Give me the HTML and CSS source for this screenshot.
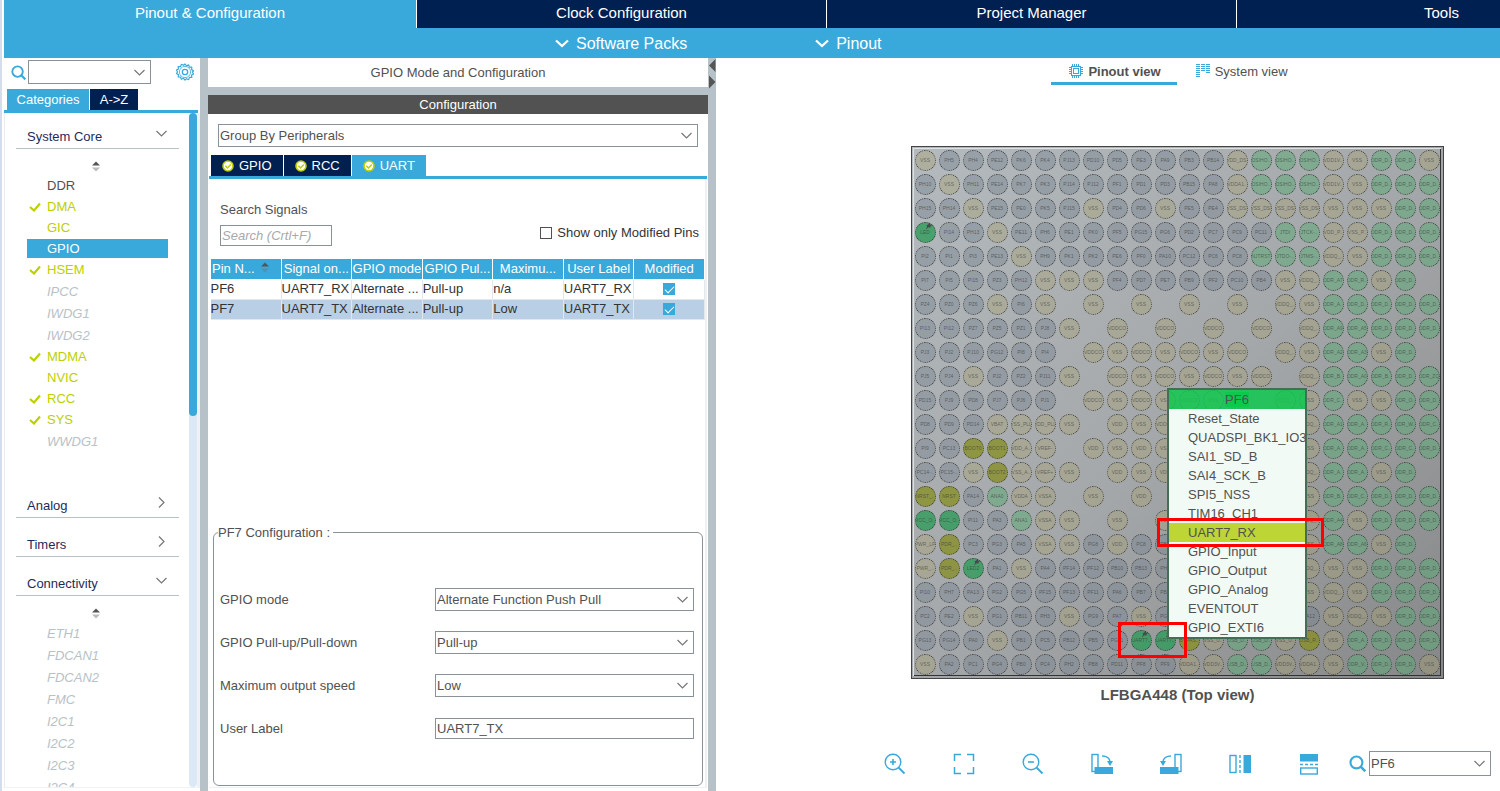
FILE: index.html
```html
<!DOCTYPE html>
<html lang="en">
<head>
    <meta charset="UTF-8">
    <meta name="viewport" content="width=device-width, initial-scale=1.0">
    <title>Pinout &amp; Configuration</title>
    <link rel="stylesheet" href="styles.css">
</head>
<body>
    <svg class="defs" aria-hidden="true">
        <symbol id="i-down" viewBox="0 0 11 7"><path d="M.5 1l5 5 5-5" fill="none" stroke="currentColor" stroke-width="1.2"/></symbol>
        <symbol id="i-right" viewBox="0 0 7 11"><path d="M1 .5l5 5-5 5" fill="none" stroke="currentColor" stroke-width="1.2"/></symbol>
        <symbol id="i-tick" viewBox="0 0 12 10"><path d="M1 5l4 3.5L11 1.5" fill="none" stroke="currentColor" stroke-width="2.2"/></symbol>
        <symbol id="i-ok" viewBox="0 0 12 12"><circle cx="6" cy="6" r="5" fill="#fff" stroke="#bccf00" stroke-width="1.6"/><path d="M3.3 5.8l2.2 2.2L8.8 4.6" fill="none" stroke="#bccf00" stroke-width="1.5"/></symbol>
        <symbol id="i-sort" viewBox="0 0 8 11"><path d="M0 4.5L4 .5l4 4z" fill="#555"/><path d="M0 6.5l4 4 4-4z" fill="currentColor"/></symbol>
        <symbol id="i-search" viewBox="0 0 16 16"><circle cx="7" cy="7" r="5.6" fill="none" stroke="currentColor" stroke-width="2"/><path d="M11 11l4.3 4.3" stroke="currentColor" stroke-width="2.4"/></symbol>
        <symbol id="i-pin" viewBox="0 0 8 8"><path d="M4 0l4 3-1.5 1L6 6 4 5.5 1 8l1.500-3.500L1.500 3l2-.5z" fill="#4a4a4a"/></symbol>
    </svg>

    <div class="app">
        <nav class="main-tabs">
            <button class="main-tab active">Pinout &amp; Configuration</button>
            <button class="main-tab">Clock Configuration</button>
            <button class="main-tab">Project Manager</button>
            <button class="main-tab">Tools</button>
        </nav>
        <div class="sub-bar">
            <button><svg width="14" height="9"><path d="M1 1.500l6 5.500 6-5.500" fill="none" stroke="#fff" stroke-width="2.200"/></svg>Software Packs</button>
            <button><svg width="14" height="9"><path d="M1 1.500l6 5.500 6-5.500" fill="none" stroke="#fff" stroke-width="2.200"/></svg>Pinout</button>
        </div>

        <main class="panes">
            <aside class="sidebar">
                <div class="side-search">
                    <svg class="blue" width="15" height="15"><use href="#i-search"/></svg>
                    <div class="combo">
                        <select aria-label="Search peripheral"><option></option></select>
                        <svg width="11" height="7"><use href="#i-down"/></svg>
                    </div>
                    <button class="gear" aria-label="Settings">
                        <svg width="18" height="18" viewBox="0 0 18 18" fill="none" stroke="#39a9dc">
                            <path d="M9 1l1.500 1.900 2.200-1 .7 2.300 2.400 0-.2 2.400 2 1.100L16.400 9l1.200 1.900-2 1.100.2 2.400-2.400 0-.7 2.300-2.200-1L9 17.200l-1.500-1.900-2.200 1-.7-2.300-2.400 0 .2-2.400-2-1.100L1.600 9 .4 7.100l2-1.100-.2-2.400 2.400 0 .7-2.300 2.200 1z" stroke-width="1.200" stroke-linejoin="round"/>
                            <circle cx="9" cy="9" r="5.600" stroke-width=".8"/>
                            <circle cx="9" cy="9" r="2.700" stroke-width="1.300"/>
                        </svg>
                    </button>
                </div>
                <div class="tabs side-tabs">
                    <button class="tab active">Categories</button>
                    <button class="tab">A-&gt;Z</button>
                </div>
                <div class="tree">
                    <div class="tree-list">
                        <button class="category">System Core <svg width="11" height="7"><use href="#i-down"/></svg></button>
                        <div class="group">
                            <svg class="sorter" width="8" height="11"><use href="#i-sort"/></svg>
                            <ul>
                                <li>DDR</li>
                                <li class="used"><svg width="12" height="10"><use href="#i-tick"/></svg>DMA</li>
                                <li class="used">GIC</li>
                                <li class="selected">GPIO</li>
                                <li class="used"><svg width="12" height="10"><use href="#i-tick"/></svg>HSEM</li>
                                <li class="off">IPCC</li>
                                <li class="off">IWDG1</li>
                                <li class="off">IWDG2</li>
                                <li class="used"><svg width="12" height="10"><use href="#i-tick"/></svg>MDMA</li>
                                <li class="used">NVIC</li>
                                <li class="used"><svg width="12" height="10"><use href="#i-tick"/></svg>RCC</li>
                                <li class="used"><svg width="12" height="10"><use href="#i-tick"/></svg>SYS</li>
                                <li class="off">WWDG1</li>
                            </ul>
                        </div>
                        <button class="category">Analog <svg width="11" height="11"><use href="#i-right"/></svg></button>
                        <button class="category">Timers <svg width="11" height="11"><use href="#i-right"/></svg></button>
                        <button class="category">Connectivity <svg width="11" height="7"><use href="#i-down"/></svg></button>
                        <div class="group">
                            <svg class="sorter" width="8" height="11"><use href="#i-sort"/></svg>
                            <ul>
                                <li class="off">ETH1</li>
                                <li class="off">FDCAN1</li>
                                <li class="off">FDCAN2</li>
                                <li class="off">FMC</li>
                                <li class="off">I2C1</li>
                                <li class="off">I2C2</li>
                                <li class="off">I2C3</li>
                                <li class="off">I2C4</li>
                            </ul>
                        </div>
                    </div>
                    <div class="scrollbar"><div class="thumb"></div></div>
                </div>
            </aside>

            <div class="splitter"></div>

            <section class="config">
                <h2 class="config-title">GPIO Mode and Configuration</h2>
                <h3 class="config-bar">Configuration</h3>
                <div class="config-body">
                    <div class="combo group-by">
                        <select aria-label="Group by"><option>Group By Peripherals</option></select>
                        <svg width="11" height="7"><use href="#i-down"/></svg>
                    </div>
                    <div class="tabs config-tabs">
                        <button class="tab"><svg width="12" height="12"><use href="#i-ok"/></svg>GPIO</button>
                        <button class="tab"><svg width="12" height="12"><use href="#i-ok"/></svg>RCC</button>
                        <button class="tab active"><svg width="12" height="12"><use href="#i-ok"/></svg>UART</button>
                    </div>
                    <div class="tab-panel">
                        <div class="filters">
                            <div class="signal-search">
                                <label for="signals">Search Signals</label>
                                <input type="text" id="signals" placeholder="Search (Crtl+F)">
                            </div>
                            <label class="only-modified"><input type="checkbox">Show only Modified Pins</label>
                        </div>
                        <table>
                            <thead>
                                <tr>
                                    <th class="sorted">Pin N... <svg width="8" height="11"><use href="#i-sort"/></svg></th>
                                    <th>Signal on...</th>
                                    <th>GPIO mode</th>
                                    <th>GPIO Pul...</th>
                                    <th>Maximu...</th>
                                    <th>User Label</th>
                                    <th>Modified</th>
                                </tr>
                            </thead>
                            <tbody>
                                <tr>
                                    <td>PF6</td><td>UART7_RX</td><td>Alternate ...</td><td>Pull-up</td><td>n/a</td><td>UART7_RX</td>
                                    <td class="check"><input type="checkbox" checked aria-label="PF6 modified"></td>
                                </tr>
                                <tr class="current">
                                    <td>PF7</td><td>UART7_TX</td><td>Alternate ...</td><td>Pull-up</td><td>Low</td><td>UART7_TX</td>
                                    <td class="check"><input type="checkbox" checked aria-label="PF7 modified"></td>
                                </tr>
                            </tbody>
                        </table>
                        <fieldset>
                            <legend>PF7 Configuration :</legend>
                            <div class="field">
                                <label for="mode">GPIO mode</label>
                                <div class="combo">
                                    <select id="mode"><option>Alternate Function Push Pull</option></select>
                                    <svg width="11" height="7"><use href="#i-down"/></svg>
                                </div>
                            </div>
                            <div class="field">
                                <label for="pull">GPIO Pull-up/Pull-down</label>
                                <div class="combo">
                                    <select id="pull"><option>Pull-up</option></select>
                                    <svg width="11" height="7"><use href="#i-down"/></svg>
                                </div>
                            </div>
                            <div class="field">
                                <label for="speed">Maximum output speed</label>
                                <div class="combo">
                                    <select id="speed"><option>Low</option></select>
                                    <svg width="11" height="7"><use href="#i-down"/></svg>
                                </div>
                            </div>
                            <div class="field">
                                <label for="user-label">User Label</label>
                                <input type="text" id="user-label" value="UART7_TX">
                            </div>
                        </fieldset>
                    </div>
                </div>
            </section>

            <div class="splitter">
                <svg width="8" height="32"><path d="M7.500 1v13L1 7.500zM1 17.500v13L7.500 24z" fill="#555"/></svg>
            </div>

            <section class="pinout">
                <div class="views">
                    <button class="view active">
                        <svg width="14" height="14" fill="none" stroke="#39a9dc">
                            <rect x="2.500" y="2.500" width="9" height="9"/>
                            <rect x="4.500" y="4.500" width="5" height="5"/>
                            <path d="M3 1h8M3 13h8" stroke-width="2" stroke-dasharray="1 1"/>
                            <path d="M1 3v8M13 3v8" stroke-width="2" stroke-dasharray="1 1"/>
                        </svg>
                        Pinout view
                    </button>
                    <button class="view">
                        <svg width="14" height="14" fill="none" stroke="#39a9dc" stroke-width="4">
                            <path d="M2 0v13" stroke-dasharray="1 1"/>
                            <path d="M7 0v7" stroke-dasharray="1 1"/>
                            <path d="M12 0v9" stroke-dasharray="1 1"/>
                        </svg>
                        System view
                    </button>
                </div>

                <div class="chip">
                    <div class="pins" id="pins"></div>
                    <div class="signal-menu">
                        <div class="menu-title"><span>PF6</span></div>
                        <button>Reset_State</button>
                        <button>QUADSPI_BK1_IO3</button>
                        <button>SAI1_SD_B</button>
                        <button>SAI4_SCK_B</button>
                        <button>SPI5_NSS</button>
                        <button>TIM16_CH1</button>
                        <button class="chosen">UART7_RX</button>
                        <button>GPIO_Input</button>
                        <button>GPIO_Output</button>
                        <button>GPIO_Analog</button>
                        <button>EVENTOUT</button>
                        <button>GPIO_EXTI6</button>
                    </div>
                    <div class="mark mark-signal"></div>
                    <div class="mark mark-pins"></div>
                </div>
                <p class="caption">LFBGA448 (Top view)</p>

                <div class="toolbar">
                    <button aria-label="Zoom in"><svg width="22" height="22" fill="none" stroke="#39a9dc" stroke-width="1.400"><circle cx="9" cy="9" r="7.800"/><path d="M14.500 14.500l6 6"  stroke-width="1.800"/><path d="M6 9h6M9 6v6" stroke-width="1.600"/></svg></button>
                    <button aria-label="Best fit"><svg width="22" height="22" fill="none" stroke="#39a9dc" stroke-width="1.500"><path d="M1.500 8V1.500H8M14 1.500h6.500V8M20.500 14v6.500H14M8 20.500H1.500V14"/></svg></button>
                    <button aria-label="Zoom out"><svg width="22" height="22" fill="none" stroke="#39a9dc" stroke-width="1.400"><circle cx="9" cy="9" r="7.800"/><path d="M14.500 14.500l6 6" stroke-width="1.800"/><path d="M6 9h6" stroke-width="1.600"/></svg></button>
                    <button aria-label="Rotate right"><svg width="22" height="22" fill="none" stroke="#39a9dc" stroke-width="1.400"><rect x="1" y="1.500" width="6" height="17"/><path d="M3.500 14H22v7H3.500z" fill="#39a9dc" stroke="none"/><path d="M11 3c5 0 7.500 2 8.200 6"/><path d="M16 8h6l-3 5z" fill="#39a9dc" stroke="none"/></svg></button>
                    <button aria-label="Rotate left"><svg width="22" height="22" fill="none" stroke="#39a9dc" stroke-width="1.400"><rect x="15" y="1.500" width="6" height="17"/><path d="M0 14h18.500v7H0z" fill="#39a9dc" stroke="none"/><path d="M11 3C6 3 3.500 5 2.800 9"/><path d="M0 8h6l-3 5z" fill="#39a9dc" stroke="none"/></svg></button>
                    <button aria-label="Flip horizontally"><svg width="22" height="22" fill="none" stroke="#39a9dc" stroke-width="1.400"><rect x="1" y="2.500" width="6" height="17"/><path d="M11 2v18" stroke-dasharray="3 2"/><path d="M14.500 2H22v18h-7.500z" fill="#39a9dc" stroke="none"/></svg></button>
                    <button aria-label="Flip vertically"><svg width="22" height="22" fill="none" stroke="#39a9dc" stroke-width="1.400"><path d="M2 1h18v7.500H2z" fill="#39a9dc" stroke="none"/><path d="M2 11.500h18" stroke-dasharray="3 2"/><rect x="2.700" y="15" width="16.600" height="6"/></svg></button>
                    <div class="pin-search">
                        <svg class="blue" width="17" height="17"><use href="#i-search"/></svg>
                        <div class="combo">
                            <select aria-label="Find pin"><option>PF6</option></select>
                            <svg width="11" height="7"><use href="#i-down"/></svg>
                        </div>
                    </div>
                </div>
            </section>
        </main>
    </div>
    <script src="script.js"></script>
</body>
</html>
```
FILE: styles.css
```css
*{
    box-sizing: border-box;
}
body{
    margin: 0;
    font: 13px/15px "Liberation Sans", Arial, sans-serif;
    color: #515151;
    background-color: white;
}
button, input, select{
    font: inherit;
    color: inherit;
    margin: 0;
}
button{
    border: none;
    background: none;
    padding: 0;
    cursor: pointer;
}
h2, h3, p, ul{
    margin: 0;
    padding: 0;
    font-size: 13px;
    font-weight: normal;
}
.defs{
    position: absolute;
    width: 0;
    height: 0;
}
.blue{
    color: #39a9dc;
}
.app{
    display: flex;
    flex-direction: column;
    height: 100vh;
    overflow: hidden;
    border-left: 2px solid #d5dcec;
    padding-left: 2px;
}

/* top bars */
.main-tabs{
    display: flex;
    overflow: hidden;
    background-color: #39a9dc;
}
.main-tab{
    flex: 0 0 410px;
    height: 28px;
    padding-bottom: 3px;
    border-left: 1px solid white;
    background-color: #002052;
    color: white;
    font-size: 15px;
}
.main-tab.active{
    flex-basis: 412px;
    border-left: none;
    background-color: #39a9dc;
}
.sub-bar{
    display: flex;
    gap: 128px;
    height: 30px;
    padding-left: 551px;
    background-color: #39a9dc;
}
.sub-bar button{
    display: flex;
    align-items: center;
    gap: 7px;
    color: white;
    font-size: 16px;
}
.panes{
    flex: 1;
    min-height: 0;
    display: grid;
    grid-template-columns: 196px 8px 500px 8px minmax(0, 1fr);
    grid-template-rows: minmax(0, 1fr);
}
.splitter{
    background-color: #b7c2c8;
}

/* shared controls */
.combo{
    display: grid;
    align-items: center;
    height: 23px;
    border: 1px solid #8a9299;
    background-color: white;
}
.combo select{
    grid-area: 1 / 1;
    appearance: none;
    width: 100%;
    height: 21px;
    padding: 0 18px 0 1px;
    border: none;
    background: none;
}
.combo svg{
    grid-area: 1 / 1;
    justify-self: end;
    margin-right: 5px;
    color: #777;
    pointer-events: none;
}
input[type=text]{
    height: 21px;
    padding: 0 1px;
    border: 1px solid #8a9299;
    background-color: white;
}
input[type=checkbox]{
    appearance: none;
    width: 12px;
    height: 12px;
    border: 1px solid #515151;
    background-color: white;
}
input[type=checkbox]:checked{
    display: grid;
    border-color: #39a9dc;
    background-color: #39a9dc;
}
input[type=checkbox]:checked::before{
    content: "";
    width: 8px;
    height: 4px;
    margin: 2px 0 0 1px;
    border-left: 1px solid white;
    border-bottom: 1px solid white;
    transform: rotate(-45deg);
}
.tabs{
    display: flex;
    gap: 1px;
    border-bottom: 3px solid #39a9dc;
}
.tab{
    display: flex;
    align-items: center;
    justify-content: center;
    height: 21px;
    background-color: #002052;
    color: white;
}
.tab.active{
    background-color: #39a9dc;
}

/* left tree */
.sidebar{
    display: flex;
    flex-direction: column;
    min-height: 0;
    padding-bottom: 3px;
}
.side-search{
    display: flex;
    align-items: center;
    height: 31px;
    padding: 0 7px 3px;
}
.side-search svg{
    flex: none;
}
.side-search .combo{
    flex: none;
    width: 123px;
    height: 24px;
    margin: 0 25px 0 2px;
}
.gear{
    height: 18px;
}
.side-tabs{
    padding-left: 3px;
    margin-right: 2px;
}
.side-tabs .tab{
    width: 48px;
}
.side-tabs .tab.active{
    width: 82px;
}
.tree{
    flex: 1;
    min-height: 0;
    display: flex;
    border-left: 1px solid #ebecf1;
    border-right: 3px solid #eff1f5;
    border-bottom: 1px solid #eff1f5;
}
.tree-list{
    flex: 1;
    overflow: hidden;
    padding: 10px 10px 0 11px;
}
.category{
    display: flex;
    align-items: center;
    justify-content: space-between;
    width: 100%;
    height: 26px;
    padding: 1px 12px 0 11px;
    border-bottom: 1px solid #b7c2c8;
    color: #1f2a5a;
}
.category + .category{
    margin-top: 13px;
}
.category svg{
    color: #777;
    margin-bottom: 5px;
}
.group{
    padding-bottom: 40px;
}
.group + .category{
    margin-top: 0;
}
.sorter{
    display: block;
    margin: 12px auto 3px 76px;
    color: #bbb;
}
.group ul{
    list-style: none;
    padding: 0 11px;
}
.group li{
    display: flex;
    align-items: center;
    height: 21px;
    padding-left: 20px;
}
.group li svg{
    margin: 0 6px 0 -18px;
}
.group li.used{
    color: #bccf00;
}
.group li.off{
    height: 22px;
    color: #b7c2c8;
    font-style: italic;
}
.group li.selected{
    height: 19px;
    margin: 1px 0;
    background-color: #39a9dc;
    color: white;
}
.scrollbar{
    width: 8px;
    border-radius: 4px;
    background-color: #dae9f5;
}
.thumb{
    height: 45%;
    border-radius: 4px;
    background-color: #39a9dc;
}

/* configuration */
.config{
    display: flex;
    flex-direction: column;
    min-height: 0;
}
.config-title{
    padding: 7px 0;
    text-align: center;
    border-bottom: 8px solid #b7c2c8;
}
.config-bar{
    padding: 2px 0;
    text-align: center;
    background-color: #515251;
    color: white;
}
.config-body{
    flex: 1;
    display: flex;
    flex-direction: column;
    padding: 10px 1px 3px;
}
.group-by{
    margin: 0 9px 8px;
}
.config-tabs{
    padding-left: 2px;
}
.config-tabs .tab{
    gap: 5px;
    padding: 0 11px;
}
.tab-panel{
    flex: 1;
    display: flex;
    flex-direction: column;
    padding: 23px 1px 0;
    border-right: 2px solid #eff1f5;
    border-bottom: 1px solid #eff1f5;
}
.filters{
    display: flex;
    justify-content: space-between;
    align-items: flex-end;
    padding: 0 5px 13px 10px;
}
.signal-search{
    display: flex;
    flex-direction: column;
    gap: 8px;
}
.signal-search input{
    width: 112px;
}
.signal-search input::placeholder{
    color: #a9a9a9;
    font-style: italic;
}
.only-modified{
    display: flex;
    align-items: center;
    gap: 5px;
    padding-bottom: 6px;
    color: #333;
}
table{
    width: 495px;
    table-layout: fixed;
    border-collapse: collapse;
    color: #333;
}
th{
    height: 20px;
    padding: 0;
    border: solid white;
    border-width: 0 1px 1px;
    background-color: #39a9dc;
    color: white;
    font-weight: normal;
    white-space: nowrap;
}
.sorted{
    padding-left: 1px;
    text-align: left;
}
.sorted svg{
    margin-left: 3px;
    color: #5590ae;
}
td{
    height: 20px;
    padding: 0 0 1px;
    border: solid #e3e7ec;
    border-width: 0 1px 1px 0;
    white-space: nowrap;
    overflow: hidden;
}
td.check input{
    margin: 0 auto;
}
.current{
    background-color: #b8cfe6;
}
fieldset{
    margin: auto 1px 1px 3px;
    height: 261px;
    padding: 48px 8px 0 6px;
    border: 1px solid #8a9299;
    border-radius: 6px;
}
legend{
    padding: 0 3px 0 0;
    margin-left: -2px;
}
.field{
    display: grid;
    grid-template-columns: 215px 1fr;
    align-items: center;
    height: 23px;
    margin-bottom: 20px;
}

/* chip */
.pinout{
    display: flex;
    flex-direction: column;
    align-items: center;
    padding-left: 139px;
}
.views{
    display: flex;
    gap: 8px;
    margin-bottom: 61px;
}
.view{
    display: flex;
    align-items: center;
    gap: 5px;
    height: 27px;
    padding: 2px 16px 0 11px;
    border-bottom: 3px solid transparent;
}
.view.active{
    padding: 2px 16px 0 18px;
    border-color: #39a9dc;
    font-weight: bold;
}
.chip{
    position: relative;
    padding: 1px 2px 2px 1px;
    border: 1px solid #444;
    background-image: linear-gradient(135deg, #b4babe, #a5a8aa 50%, #868788);
}
.pins{
    display: grid;
    grid-template-columns: repeat(22, 24px);
    grid-auto-rows: 24px;
    place-items: center;
    box-shadow: inset 1px 1px #dde1e1, inset -1px -1px #333;
}
.pin{
    display: flex;
    align-items: center;
    justify-content: center;
    position: relative;
    width: 21px;
    height: 21px;
    border: 1px dotted #3c3c3c;
    border-radius: 50%;
    font-size: 5px;
    line-height: 6px;
    white-space: nowrap;
    overflow: hidden;
    color: rgba(50, 50, 50, .6);
    background-color: rgba(120, 130, 145, .45);
}
.pin.power{
    background-color: rgba(168, 160, 115, .4);
}
.pin.fixed{
    background-color: rgba(95, 170, 120, .55);
}
.pin.boot{
    background-color: rgba(135, 142, 40, .8);
}
.pin.set{
    background-color: rgba(48, 155, 90, .8);
}
.pin svg{
    position: absolute;
    top: -1px;
    right: 3px;
}
.signal-menu{
    position: absolute;
    left: 255px;
    top: 241px;
    width: 140px;
    border: 2px solid #446e55;
}
.menu-title{
    padding: 2px 0;
    text-align: center;
    background-color: rgba(15, 200, 80, .85);
}
.menu-title span{
    background-color: #0ac94b;
}
.signal-menu button{
    display: block;
    width: 100%;
    height: 19px;
    padding-left: 19px;
    text-align: left;
    background-color: #f1faf5;
}
.signal-menu .chosen{
    background-color: #bdd535;
}
.mark{
    position: absolute;
    border: 3px solid #f00;
}
.mark-signal{
    left: 245px;
    top: 371px;
    width: 167px;
    height: 29px;
}
.mark-pins{
    left: 206px;
    top: 475px;
    width: 69px;
    height: 36px;
}
.caption{
    margin-top: 7px;
    font-size: 15px;
    line-height: 17px;
    font-weight: bold;
}
.toolbar{
    display: flex;
    align-items: center;
    align-self: flex-end;
    gap: 47px;
    margin: auto 9px 15px 0;
}
.toolbar button{
    height: 22px;
}
.pin-search{
    display: flex;
    align-items: center;
    gap: 3px;
    margin-left: -18px;
}
.pin-search .combo{
    width: 122px;
    height: 25px;
}
```
FILE: script.js
```js
// ball map, one line per row, "-" is an empty position, "~" stands for a cut label
const rows = [
    'VSS PH5 PH4 PE12 PK6 PK4 PJ13 PD10 PD5 PE3 PA9 PB3 PB14 VDD_DSI DSIHO~ DSIHO~ DSIHO~ VDD1V~ VSS DDR_D~ DDR_D~ VSS',
    'PH10 VSS PH11 PE14 PK7 PK3 PJ14 PJ12 PF1 PD1 PD3 PB15 PA8 VDDA1~ DSIHO~ DSIHO~ DSIHO~ VDD1V~ VSS DDR_D~ DDR_D~ DDR_D~',
    'PH15 PH14 VSS PE15 PE0 PK5 PJ15 VSS PD4 PD6 VSS PE5 PE4 VSS_DSI VSS_DSI VSS_DSI VSS_DSI VSS VSS VSS DDR_D~ DDR_D~',
    'LED PI14 PH13 VSS PE11 PH6 PE1 PK0 PF5 PG15 PG6 PD2 PC7 PC9 PC11 JTDI JTCK-~ VDD_P~ VSS_P~ DDR_D~ DDR_D~ DDR_D~',
    'PI2 PI1 PI3 PE13 VSS PH9 PK1 PK2 PE6 PF0 PA10 PC12 PC6 PC8 NJTRST JTDO-~ JTMS-~ VDDQ_~ VSS DDR_D~ DDR_D~ DDR_D~',
    'PI7 PI5 PI15 PZ3 PH12 VSS VSS VSS PF4 PD7 PE7 PB9 PF2 PC10 PB4 VSS VDDQ_~ DDR_A7 DDR_R~ VSS DDR_D~ -',
    'PZ4 PZ0 PZ6 VSS PI6 VSS - VSS - VSS - VSS - VSS - VDDQ_~ VSS DDR_A~ DDR_D~ DDR_D~ DDR_D~ DDR_D~',
    'PI13 PI12 PZ7 PZ5 PZ1 PJ8 VSS - VDDCO - VDDCO - VDDCO - VDDCO - VDDQ_~ DDR_A9 DDR_A5 DDR_D~ DDR_D~ DDR_D~',
    'PJ3 PJ2 PJ10 PG12 PI8 PI4 - VDDCO VSS VDDCO VSS VDDCO VSS VDDCO - VDDQ_~ VSS DDR_A2 DDR_A3 VSS DDR_D~ -',
    'PJ5 PJ4 VSS PJ2 PZ2 PJ11 VSS - VDDCO VSS VDDCO VSS VDDCO VSS VDDCO - VDDQ_~ DDR_B~ DDR_A0 DDR_B~ DDR_D~ DDR_ZQ',
    'PD15 PJ9 PD8 PJ7 PJ6 PJ1 - VDDCO VSS VDDCO VSS VDDCO VSS - - VDDQ_~ VSS DDR_C~ VSS VSS DDR_O~ DDR_D~',
    'PD8 PD9 PD14 VBAT VSS_PLL VDD_PLL VSS - VDD VSS VDDCO - - - - - VDDQ_~ DDR_A1 DDR_A~ DDR_R~ DDR_W~ DDR_C~',
    'PI9 PC13 BOOT0 BOOT1 VDD_A~ VREF- - VDD VSS VDD VSS - - - - - VSS DDR_A~ DDR_A~ DDR_C~ DDR_C~ DDR_D~',
    'PC14-~ PC15-~ VSS BOOT2 VSS_A~ VREF+ VSS - VDD VSS VDD - - - - - VDDQ_~ DDR_A~ DDR_A~ VSS DDR_D~ -',
    'NRST_~ NRST PA14 ANA0 VDDA VSSA - VSS - VDD - - - - - - VSS DDR_B~ DDR_C~ DDR_D~ DDR_D~ DDR_D~',
    'RCC_O~ RCC_O~ PI11 PA3 ANA1 VSSA VSS - VSS - VSS - - - - - VDDQ_~ DDR_A4 VSS DDR_D~ DDR_D~ DDR_D~',
    'PWR_LP PDR_~ PC3 PG3 PA5 VSSA VSS PG8 VDD PC8 PB6 - - - - - VSS DDR_A8 DDR_A6 VSS DDR_D~ -',
    'PWR_~ PDR_~ LED2 PA1 VSS PA4 PF14 PF12 PB10 PB13 PH4 - - - - - VDDQ_~ VSS VSS DDR_D~ DDR_D~ DDR_D~',
    'PI10 PH7 PA13 PG2 PG5 PF15 PF13 PF11 PA6 PB7 PB2 - - - - - VSS VDDQ_~ VSS DDR_D~ DDR_D~ DDR_D~',
    'PC2 PE2 VSS PG1 PB11 PH3 VSS PG9 PA7 VSS PG7 - - - - - PA12 VSS VDDQ_~ VSS DDR_D~ DDR_D~',
    'PG13 PG14 PA0 VSS PB1 PC5 PB12 PB5 PG11 UART7~ UART7~ BYPAS~ VSS_U~ USB_D~ USB_D~ VSS_U~ USB_R~ VSS DDR_A~ DDR_D~ DDR_D~ DDR_D~',
    'VSS PA2 PC1 PG4 PB0 PC4 PH2 PB8 PD11 PF8 PF9 VDDA1~ VDD3V~ USB_D~ USB_D~ VDD3V~ VDDA1~ VSS DDR_V~ DDR_D~ DDR_D~ VSS'
]

const kindOf = function (name) {
    if (/^(LED|UART|RCC)/.test(name)) return 'set'
    if (/^(BOOT|NRST|PDR|BYPAS|USB_R)/.test(name)) return 'boot'
    if (/^(V|PWR)/.test(name)) return 'power'
    if (/^(DDR|DSI|JT|NJ|ANA|USB)/.test(name)) return 'fixed'
    return 'io'
}

const pins = document.getElementById('pins')
rows.forEach(row => {
    row.split(' ').forEach(name => {
        const pin = document.createElement('div')
        if (name != '-') {
            pin.className = 'pin ' + kindOf(name)
            pin.textContent = name.replace('~', '..')
            if (/^(LED|UART)/.test(name)) {
                pin.innerHTML += '<svg width="7" height="8"><use href="#i-pin"/></svg>'
            }
        }
        pins.appendChild(pin)
    })
})
```
